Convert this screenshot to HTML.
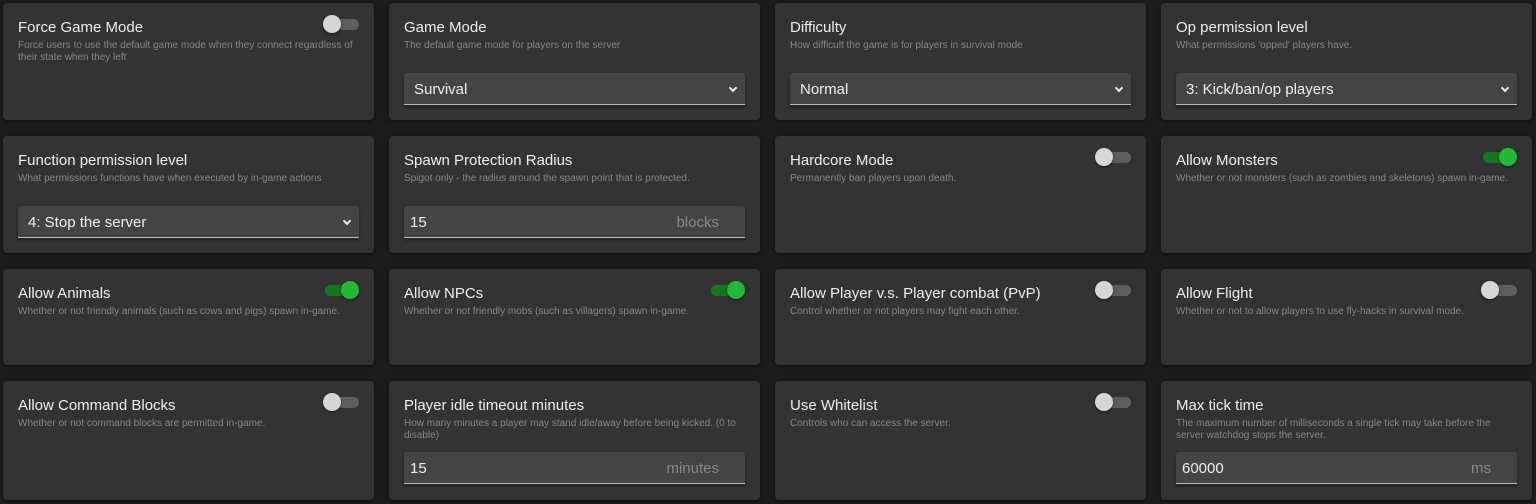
<!DOCTYPE html>
<html><head><style>
*{box-sizing:border-box;margin:0;padding:0}
body{width:1536px;height:504px;background:#1c1c1c;font-family:"Liberation Sans",sans-serif;position:relative;overflow:hidden}
.c{position:absolute;width:371px;background:#333;border-radius:4px;box-shadow:0 1px 3px rgba(0,0,0,.5)}
.t{position:absolute;left:15px;top:16px;font-size:15px;color:#eee}
.d{position:absolute;left:15px;top:37px;width:345px;font-size:10px;line-height:12px;color:#858585}
.s,.i{position:absolute;left:15px;width:341px;height:32px;background:#444;border-radius:3px 3px 0 0;border-bottom:1px solid #bbb;box-shadow:0 2px 3px rgba(0,0,0,.4);color:#eee;font-size:15px;line-height:33px;padding-left:10px}
.i{padding-left:6px}
.s:after{content:"";position:absolute;right:9px;top:12px;width:4px;height:4px;border-right:2px solid #eee;border-bottom:2px solid #eee;transform:rotate(45deg)}
.u{position:absolute;right:26px;top:0;color:#888}
.g{position:absolute;top:12px;right:15px;width:36px;height:18px}
.g:before{content:"";position:absolute;left:2px;right:0;top:4px;height:11px;border-radius:6px;background:#5e5e5e}
.g:after{content:"";position:absolute;left:0;top:0;width:18px;height:18px;border-radius:50%;background:#d6d6d6;box-shadow:0 1px 3px rgba(0,0,0,.5)}
.g.on:before{background:#13791f}
.g.on:after{left:18px;background:#22b933}
</style></head><body>
<div class="c" style="left:3px;top:3px;height:117px"><div class="t">Force Game Mode</div><div class="d">Force users to use the default game mode when they connect regardless of their state when they left</div><div class="g"></div></div>
<div class="c" style="left:389px;top:3px;height:117px"><div class="t">Game Mode</div><div class="d">The default game mode for players on the server</div><div class="s" style="top:70px">Survival</div></div>
<div class="c" style="left:775px;top:3px;height:117px"><div class="t">Difficulty</div><div class="d">How difficult the game is for players in survival mode</div><div class="s" style="top:70px">Normal</div></div>
<div class="c" style="left:1161px;top:3px;height:117px"><div class="t">Op permission level</div><div class="d">What permissions 'opped' players have.</div><div class="s" style="top:70px">3: Kick/ban/op players</div></div>

<div class="c" style="left:3px;top:136px;height:117px"><div class="t">Function permission level</div><div class="d">What permissions functions have when executed by in-game actions</div><div class="s" style="top:70px">4: Stop the server</div></div>
<div class="c" style="left:389px;top:136px;height:117px"><div class="t">Spawn Protection Radius</div><div class="d">Spigot only - the radius around the spawn point that is protected.</div><div class="i" style="top:70px">15<span class="u">blocks</span></div></div>
<div class="c" style="left:775px;top:136px;height:117px"><div class="t">Hardcore Mode</div><div class="d">Permanently ban players upon death.</div><div class="g"></div></div>
<div class="c" style="left:1161px;top:136px;height:117px"><div class="t">Allow Monsters</div><div class="d">Whether or not monsters (such as zombies and skeletons) spawn in-game.</div><div class="g on"></div></div>

<div class="c" style="left:3px;top:269px;height:96px"><div class="t">Allow Animals</div><div class="d">Whether or not friendly animals (such as cows and pigs) spawn in-game.</div><div class="g on"></div></div>
<div class="c" style="left:389px;top:269px;height:96px"><div class="t">Allow NPCs</div><div class="d">Whether or not friendly mobs (such as villagers) spawn in-game.</div><div class="g on"></div></div>
<div class="c" style="left:775px;top:269px;height:96px"><div class="t">Allow Player v.s. Player combat (PvP)</div><div class="d">Control whether or not players may fight each other.</div><div class="g"></div></div>
<div class="c" style="left:1161px;top:269px;height:96px"><div class="t">Allow Flight</div><div class="d">Whether or not to allow players to use fly-hacks in survival mode.</div><div class="g"></div></div>

<div class="c" style="left:3px;top:381px;height:119px"><div class="t">Allow Command Blocks</div><div class="d">Whether or not command blocks are permitted in-game.</div><div class="g"></div></div>
<div class="c" style="left:389px;top:381px;height:119px"><div class="t">Player idle timeout minutes</div><div class="d">How many minutes a player may stand idle/away before being kicked. (0 to disable)</div><div class="i" style="top:71px">15<span class="u">minutes</span></div></div>
<div class="c" style="left:775px;top:381px;height:119px"><div class="t">Use Whitelist</div><div class="d">Controls who can access the server.</div><div class="g"></div></div>
<div class="c" style="left:1161px;top:381px;height:119px"><div class="t">Max tick time</div><div class="d">The maximum number of milliseconds a single tick may take before the server watchdog stops the server.</div><div class="i" style="top:71px">60000<span class="u">ms</span></div></div>
</body></html>
